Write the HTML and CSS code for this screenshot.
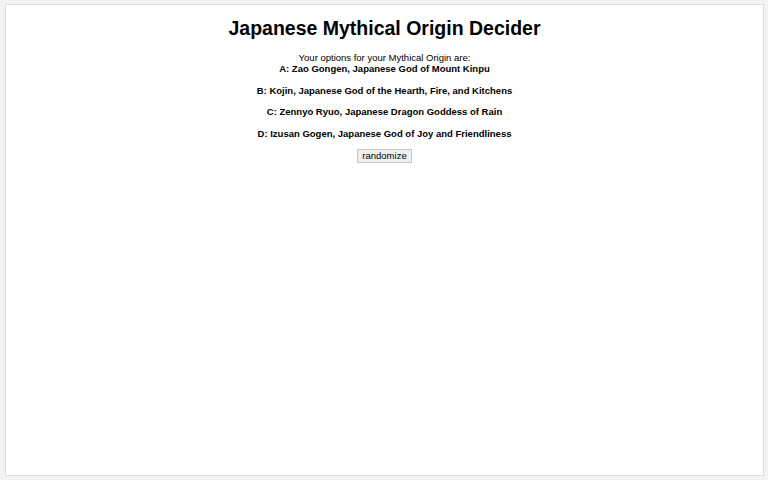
FILE: index.html
```html
<!DOCTYPE html>
<html lang="en">
<head>
    <meta charset="UTF-8">
    <meta name="viewport" content="width=device-width, initial-scale=1.0">
    <title>Japanese Mythical Origin Decider</title>
    <link rel="stylesheet" href="styles.css">
</head>
<body>
    <div class="page">
        <h1>Japanese Mythical Origin Decider</h1>
        <p class="intro">Your options for your Mythical Origin are:</p>
        <p class="option">A: Zao Gongen, Japanese God of Mount Kinpu</p>
        <p class="option">B: Kojin, Japanese God of the Hearth, Fire, and Kitchens</p>
        <p class="option">C: Zennyo Ryuo, Japanese Dragon Goddess of Rain</p>
        <p class="option">D: Izusan Gogen, Japanese God of Joy and Friendliness</p>
        <button class="btn" onclick="randomize()">randomize</button>
    </div>

    <script>
        const origins = [
            'Zao Gongen, Japanese God of Mount Kinpu',
            'Kojin, Japanese God of the Hearth, Fire, and Kitchens',
            'Zennyo Ryuo, Japanese Dragon Goddess of Rain',
            'Izusan Gogen, Japanese God of Joy and Friendliness'
        ];

        function randomize() {
            const pick = origins[Math.floor(Math.random() * origins.length)];
            alert('Your Mythical Origin is: ' + pick);
        }
    </script>
</body>
</html>
```

FILE: styles.css
```css
body {
    margin: 0;
    padding: 4px 4px 4px 5px;
    background-color: #f2f2f2;
    font-family: "Liberation Sans", Arial, sans-serif;
    color: black;
}
.page {
    height: 472px;
    box-sizing: border-box;
    background-color: white;
    border: 1px solid #dcdcdc;
    text-align: center;
    padding-top: 12px;
}
h1 {
    font-size: 19.5px;
    margin: 0 0 12px 0;
}
.intro {
    font-size: 9.5px;
    line-height: 11px;
    margin: 0;
}
.option {
    font-size: 9.5px;
    line-height: 11px;
    font-weight: bold;
    margin: 0 0 10.5px 0;
}
.btn {
    display: block;
    margin: 0 auto;
    font-family: "Liberation Sans", Arial, sans-serif;
    font-size: 9.5px;
    line-height: 12px;
    padding: 0 4px;
    background-color: #f0f0f0;
    border: 1px solid #c4c4c4;
    border-radius: 0;
}
```
